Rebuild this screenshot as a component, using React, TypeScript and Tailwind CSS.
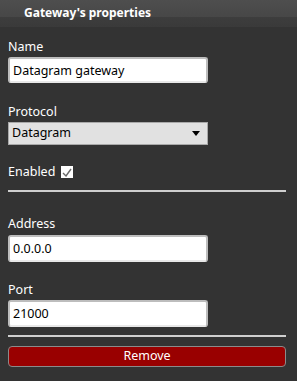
export default function App() {
  return (
    <div className="min-h-[381px] w-full bg-[#333333] font-['Noto_Sans',sans-serif] text-[12.5px] text-white">
      <div className="flex h-[27px] items-center bg-[linear-gradient(to_bottom,#4e4e4e_0%,#474747_63%,#3d3d3d_63%,#3a3a3a_100%)] pl-6 pb-[2px]">
        <span className="text-[12px] font-bold leading-none">Gateway's properties</span>
      </div>

      <div className="px-2">
        <div className="mt-[11px] leading-[18px]">Name</div>
        <input
          defaultValue="Datagram gateway"
          className="mt-[1px] block h-[26px] w-[200px] rounded-[3px] border-2 border-[#bdbdbd] border-b-[#e8e8e8] bg-white px-[3px] text-[12.5px] text-black outline-none"
        />

        <div className="mt-[20px] leading-[18px]">Protocol</div>
        <div className="mt-[1px] flex h-[23px] w-[200px] items-center justify-between border border-[#a9a9a9] bg-[#e1e1e1] pl-[3px] pr-[7px] text-black">
          <span>Datagram</span>
          <svg width="8" height="5" viewBox="0 0 8 5">
            <path d="M0 0H8L4 5Z" fill="#000" />
          </svg>
        </div>

        <div className="mt-[18px] flex items-center gap-[6px] leading-[18px]">
          <span>Enabled</span>
          <span className="flex h-[12px] w-[12px] items-center justify-center bg-white">
            <svg width="10" height="9" viewBox="0 0 10 9">
              <path d="M1 5L4 8L9 1" fill="none" stroke="#6b6b6b" strokeWidth="1.4" />
            </svg>
          </span>
        </div>

        <div className="mt-[9px] h-[2px] w-[278px] bg-[#cfcfcf]" />

        <div className="mt-[23px] leading-[18px]">Address</div>
        <input
          defaultValue="0.0.0.0"
          className="mt-[2px] block h-[27px] w-[200px] rounded-[3px] border-2 border-[#bdbdbd] border-b-[#e8e8e8] bg-white px-[3px] text-[12.5px] text-black outline-none"
        />

        <div className="mt-[19px] leading-[18px]">Port</div>
        <input
          defaultValue="21000"
          className="mt-[1px] block h-[27px] w-[200px] rounded-[3px] border-2 border-[#bdbdbd] border-b-[#e8e8e8] bg-white px-[3px] text-[12.5px] text-black outline-none"
        />

        <div className="mt-[8px] h-[2px] w-[278px] bg-[#cfcfcf]" />

        <button className="mt-[9px] flex h-[21px] w-[278px] items-center justify-center rounded-[4px] border border-[#8a8a8a] bg-[#990000] text-[12.5px] leading-none text-white">
          Remove
        </button>
      </div>
    </div>
  );
}
